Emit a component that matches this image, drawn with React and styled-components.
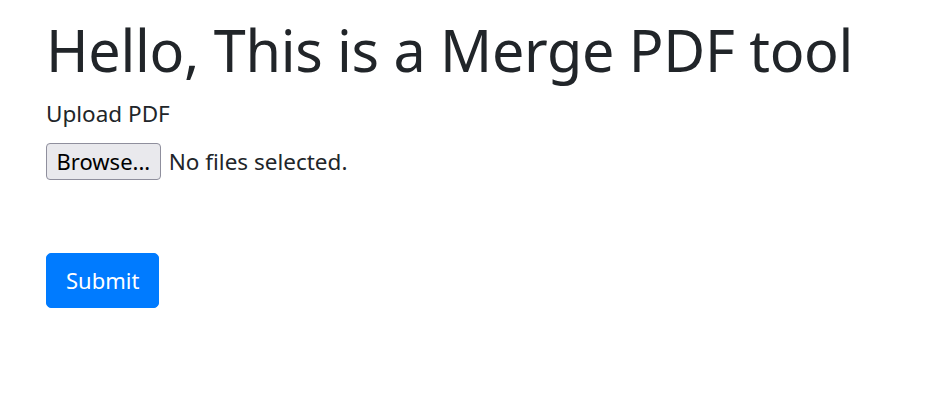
import styled, { createGlobalStyle } from 'styled-components';

const GlobalStyle = createGlobalStyle`
  html, body {
    margin: 0;
    padding: 0;
    background: #fff;
  }
  body {
    font-family: "Noto Sans", "Open Sans", sans-serif;
    color: #212529;
  }
`;

const Page = styled.div`
  padding: 16px 46px 0;
  width: 946px;
  height: 406px;
  box-sizing: border-box;
`;

const Title = styled.h1`
  margin: 0 0 12px;
  font-size: 57.5px;
  font-weight: 400;
  line-height: 1.2;
  letter-spacing: -0.3px;
`;

const Form = styled.form`
  display: flex;
  flex-direction: column;
  align-items: flex-start;
`;

const Label = styled.label`
  font-size: 22.5px;
  line-height: 1.5;
  margin-bottom: 12px;
`;

const FileRow = styled.div`
  display: flex;
  align-items: center;
  gap: 8px;
`;

const BrowseButton = styled.button`
  height: 37px;
  padding: 0 9.5px;
  font-family: "Noto Sans", sans-serif;
  font-size: 22px;
  color: #000;
  background: #e9e9ed;
  border: 1px solid #8f8f9d;
  border-radius: 4px;
`;

const FileStatus = styled.span`
  font-size: 22.5px;
`;

const SubmitButton = styled.button`
  margin-top: 73px;
  height: 55px;
  padding: 0 19px;
  font-family: "Noto Sans", sans-serif;
  font-size: 22px;
  color: #fff;
  background: #007bff;
  border: 1px solid #007bff;
  border-radius: 5px;
`;

export default function App() {
  return (
    <>
      <GlobalStyle />
      <Page>
        <Title>Hello, This is a Merge PDF tool</Title>
        <Form>
          <Label>Upload PDF</Label>
          <FileRow>
            <BrowseButton type="button">Browse...</BrowseButton>
            <FileStatus>No files selected.</FileStatus>
          </FileRow>
          <SubmitButton type="button">Submit</SubmitButton>
        </Form>
      </Page>
    </>
  );
}
